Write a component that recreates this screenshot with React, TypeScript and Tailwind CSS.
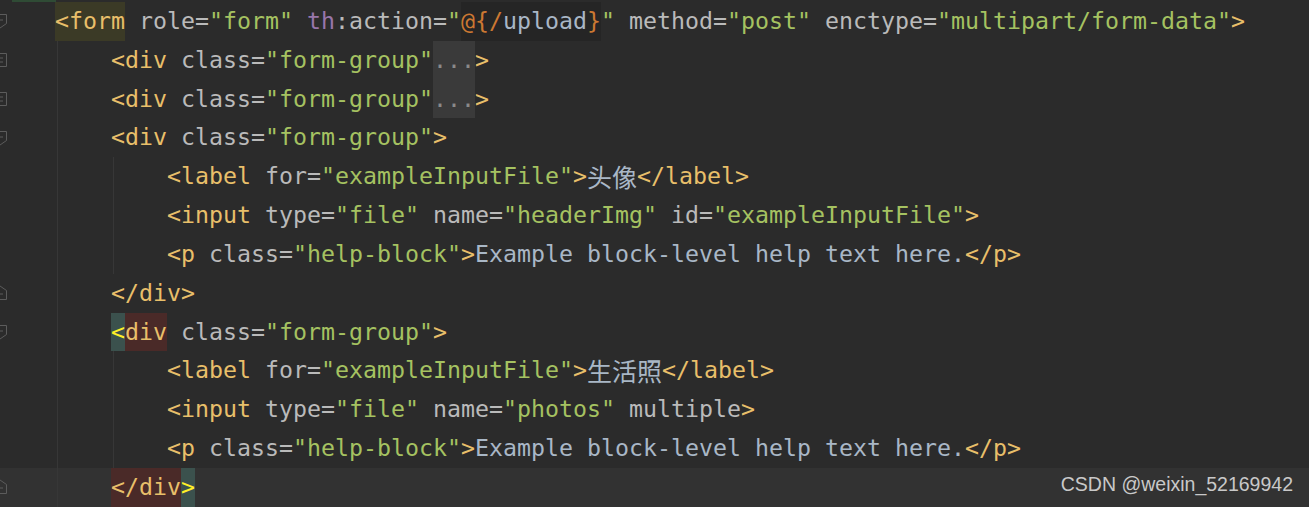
type Tok = [string, string];

const TAG = 'text-[#e8bf6a]';
const ATTR = 'text-[#bababa]';
const VAL = 'text-[#a5c261]';
const TXT = 'text-[#a9b7c6]';
const TH = 'text-[#9876aa]';
const OR = 'text-[#cc7832]';
const CJK = 'text-[#a9b7c6] text-[25px] font-["Noto_Sans_CJK_SC",sans-serif] leading-none';

interface Line {
  indent: number;
  fold?: 'open' | 'close' | 'folded';
  current?: boolean;
  toks: Tok[];
}

const lines: Line[] = [
  {
    indent: 0,
    fold: 'open',
    toks: [
      ['<form', `${TAG} bg-[#3b3a26]`],
      [' role', ATTR],
      ['=', ATTR],
      ['"form" ', VAL],
      ['th', TH],
      [':action=', ATTR],
      ['"', VAL],
      ['@{/', `${OR} bg-[#252525]`],
      ['upload', `${TXT} bg-[#252525]`],
      ['}', `${OR} bg-[#252525]`],
      ['"', VAL],
      [' method=', ATTR],
      ['"post"', VAL],
      [' enctype=', ATTR],
      ['"multipart/form-data"', VAL],
      ['>', TAG],
    ],
  },
  {
    indent: 1,
    fold: 'folded',
    toks: [
      ['<div', TAG],
      [' class=', ATTR],
      ['"form-group"', VAL],
      ['...', 'text-[#8a8a8a] bg-[#3a3a3a]'],
      ['>', TAG],
    ],
  },
  {
    indent: 1,
    fold: 'folded',
    toks: [
      ['<div', TAG],
      [' class=', ATTR],
      ['"form-group"', VAL],
      ['...', 'text-[#8a8a8a] bg-[#3a3a3a]'],
      ['>', TAG],
    ],
  },
  {
    indent: 1,
    fold: 'open',
    toks: [
      ['<div', TAG],
      [' class=', ATTR],
      ['"form-group"', VAL],
      ['>', TAG],
    ],
  },
  {
    indent: 2,
    toks: [
      ['<label', TAG],
      [' for=', ATTR],
      ['"exampleInputFile"', VAL],
      ['>', TAG],
      ['头像', CJK],
      ['</label>', TAG],
    ],
  },
  {
    indent: 2,
    toks: [
      ['<input', TAG],
      [' type=', ATTR],
      ['"file"', VAL],
      [' name=', ATTR],
      ['"headerImg"', VAL],
      [' id=', ATTR],
      ['"exampleInputFile"', VAL],
      ['>', TAG],
    ],
  },
  {
    indent: 2,
    toks: [
      ['<p', TAG],
      [' class=', ATTR],
      ['"help-block"', VAL],
      ['>', TAG],
      ['Example block-level help text here.', TXT],
      ['</p>', TAG],
    ],
  },
  { indent: 1, fold: 'close', toks: [['</div>', TAG]] },
  {
    indent: 1,
    fold: 'open',
    toks: [
      ['<', 'text-[#ffef28] bg-[#3b514d]'],
      ['div', `${TAG} bg-[#4a2a28]`],
      [' class=', ATTR],
      ['"form-group"', VAL],
      ['>', TAG],
    ],
  },
  {
    indent: 2,
    toks: [
      ['<label', TAG],
      [' for=', ATTR],
      ['"exampleInputFile"', VAL],
      ['>', TAG],
      ['生活照', CJK],
      ['</label>', TAG],
    ],
  },
  {
    indent: 2,
    toks: [
      ['<input', TAG],
      [' type=', ATTR],
      ['"file"', VAL],
      [' name=', ATTR],
      ['"photos"', VAL],
      [' multiple', ATTR],
      ['>', TAG],
    ],
  },
  {
    indent: 2,
    toks: [
      ['<p', TAG],
      [' class=', ATTR],
      ['"help-block"', VAL],
      ['>', TAG],
      ['Example block-level help text here.', TXT],
      ['</p>', TAG],
    ],
  },
  {
    indent: 1,
    fold: 'close',
    current: true,
    toks: [
      ['</div', `${TAG} bg-[#4a2a28]`],
      ['>', 'text-[#ffef28] bg-[#3b514d]'],
    ],
  },
];

function FoldIcon({ kind }: { kind: 'open' | 'close' | 'folded' }) {
  return (
    <svg width="16" height="16" viewBox="0 0 16 16" className="-ml-[8px]" fill="none" stroke="#5c5c5c" strokeWidth="1">
      {kind === 'open' && <path d="M1.5 1.5h13v9l-6.5 4.5-6.5-4.5z M5 7h6" />}
      {kind === 'close' && <path d="M1.5 14.5h13v-9l-6.5-4.5-6.5 4.5z M5 9h6" />}
      {kind === 'folded' && <path d="M1.5 1.5h13v13h-13z M5 6h6 M5 10h6" />}
    </svg>
  );
}

export default function App() {
  return (
    <div className="relative w-[1309px] h-[507px] overflow-hidden bg-[#2b2b2b] font-['DejaVu_Sans_Mono',monospace] text-[23.25px]">
      <div className="absolute left-[12px] top-0 h-[2px] w-[44px] bg-[#2f4b35]" />
      <div className="flex flex-col pt-[2px]">
        {lines.map((line, i) => (
          <div
            key={i}
            className={`flex h-[38.83px] items-stretch ${line.current ? 'bg-[#323232]' : ''}`}
          >
            <div className="flex w-[55px] shrink-0 items-center overflow-hidden">
              {line.fold && <FoldIcon kind={line.fold} />}
            </div>
            {Array.from({ length: line.indent }).map((_, k) => (
              <div key={k} className="w-[56px] shrink-0 pl-[2px]">
                <div className="h-full w-px bg-[#373737]" />
              </div>
            ))}
            <div className="flex items-stretch whitespace-pre">
              {line.toks.map(([t, c], j) => (
                <span key={j} className={`flex items-center ${c}`}>
                  {t}
                </span>
              ))}
            </div>
          </div>
        ))}
      </div>
      <div className="absolute right-[16px] bottom-[8px] font-['Liberation_Sans',sans-serif] text-[19.5px] text-[#c9c9c9]">
        CSDN @weixin_52169942
      </div>
    </div>
  );
}
